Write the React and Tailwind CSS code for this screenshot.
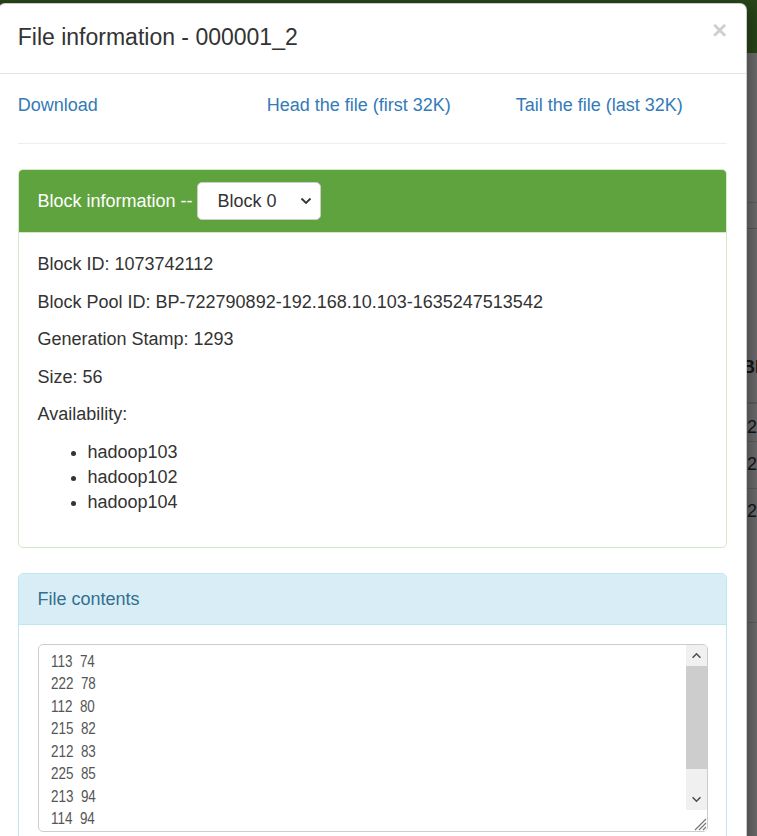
import React from 'react';

const fileLines = [
  '113  74',
  '222  78',
  '112  80',
  '215  82',
  '212  83',
  '225  85',
  '213  94',
  '114  94',
  '111  95',
];

const hosts = ['hadoop103', 'hadoop102', 'hadoop104'];

const Chevron = ({ up, className }) => (
  <svg viewBox="0 0 12 8" className={className} fill="none">
    <path
      d={up ? 'M1.5 6.5 L6 2 L10.5 6.5' : 'M1.5 1.5 L6 6 L10.5 1.5'}
      stroke="currentColor"
      strokeWidth="1.8"
    />
  </svg>
);

const Backdrop = () => (
  <div className="flex flex-col">
    <div className="h-[53px] bg-[#5fa33e]" />
    <div className="h-[150px] border-b border-[#e2e2e2]" />
    <div className="h-[26px] border-b border-[#cfcfcf]" />
    <div className="flex h-[175px] items-end border-b-2 border-[#ddd] pb-[22px]">
      <div className="w-[742px] shrink-0" />
      <span className="whitespace-nowrap font-bold text-[#333]">Block Size</span>
    </div>
    <div className="flex h-[38px] border-b border-[#ddd] pt-[11px]">
      <div className="w-[747px] shrink-0" />
      <span className="whitespace-nowrap text-[#333]">256 MB</span>
    </div>
    <div className="flex h-[47px] border-b border-[#ddd] pt-[10px]">
      <div className="w-[747px] shrink-0" />
      <span className="whitespace-nowrap text-[#333]">256 MB</span>
    </div>
    <div className="flex h-[134px] border-b border-[#ddd] pt-[10px]">
      <div className="w-[747px] shrink-0" />
      <span className="whitespace-nowrap text-[#333]">256 MB</span>
    </div>
  </div>
);

const App = () => {
  return (
    <div
      className="relative h-[836px] w-full overflow-hidden bg-white text-[18px] leading-[25px] text-[#333]"
      style={{ fontFamily: '"Liberation Sans", Arial, sans-serif' }}
    >
      <Backdrop />
      <div className="absolute inset-0 bg-black/[0.57]" />

      {/* modal */}
      <div className="absolute -left-[2px] top-[3px] w-[749px] rounded-[7px] border border-black/20 bg-white shadow-[0_6px_19px_rgba(0,0,0,0.5)]">
        <div className="flex items-start justify-between border-b border-[#e5e5e5] px-[18.75px] pb-[20px] pt-[17px]">
          <h4 className="text-[23px] leading-[32px] text-[#333]">File information - 000001_2</h4>
          <button className="-mt-[4px] text-[26px] font-bold leading-none text-black/20">×</button>
        </div>

        <div className="p-[18.75px]">
          <div className="grid grid-cols-3 gap-x-[37.5px]">
            <a className="text-[#337ab7]">Download</a>
            <a className="text-[#337ab7]">Head the file (first 32K)</a>
            <a className="text-[#337ab7]">Tail the file (last 32K)</a>
          </div>
          <hr className="my-[25px] border-t border-[#eee]" />

          <div className="mb-[25px] rounded-[5px] border border-[#d6e9c6]">
            <div className="flex items-center rounded-t-[4px] border-b border-[#d6e9c6] bg-[#5fa33e] px-[18.75px] py-[12.5px] text-white">
              <span>Block information --</span>
              <div className="ml-[4px] flex h-[37.5px] w-[124px] items-center justify-between rounded-[5px] border border-[#ccc] bg-white pl-[20px] pr-[8px] text-[#333]">
                <span>Block 0</span>
                <Chevron className="h-[8px] w-[12px] text-[#333]" />
              </div>
            </div>
            <div className="px-[18.75px] pb-[20px] pt-[18.75px]">
              <p className="mb-[12.5px]">Block ID: 1073742112</p>
              <p className="mb-[12.5px]">Block Pool ID: BP-722790892-192.168.10.103-1635247513542</p>
              <p className="mb-[12.5px]">Generation Stamp: 1293</p>
              <p className="mb-[12.5px]">Size: 56</p>
              <p className="mb-[12.5px]">Availability:</p>
              <ul className="mb-[12.5px] list-disc pl-[50px]">
                {hosts.map((h) => (
                  <li key={h}>{h}</li>
                ))}
              </ul>
            </div>
          </div>

          <div className="rounded-[5px] border border-[#bce8f1]">
            <div className="rounded-t-[4px] border-b border-[#bce8f1] bg-[#d9edf7] px-[18.75px] py-[12.5px] text-[#31708f]">
              File contents
            </div>
            <div className="p-[18.75px]">
              <div className="flex h-[188px] overflow-hidden rounded-[5px] border border-[#ccc] bg-white">
                <div className="flex-1 overflow-hidden px-[12px] pt-[6px]">
                  <div className="origin-left scale-x-[0.84] whitespace-pre text-[16px] leading-[22.5px] text-[#555]">
                    {fileLines.map((l, i) => (
                      <div key={i}>{l}</div>
                    ))}
                  </div>
                </div>
                <div className="flex w-[21px] flex-col">
                  <div className="flex h-[21px] items-center justify-center bg-[#f0f0f0]">
                    <Chevron up className="h-[7px] w-[11px] text-[#505050]" />
                  </div>
                  <div className="h-[103px] bg-[#cdcdcd]" />
                  <div className="flex-1 bg-[#f0f0f0]" />
                  <div className="flex h-[20px] items-center justify-center bg-[#f0f0f0]">
                    <Chevron className="h-[7px] w-[11px] text-[#505050]" />
                  </div>
                  <div className="flex h-[21px] items-end justify-end bg-white">
                    <svg viewBox="0 0 14 14" className="h-[14px] w-[14px]">
                      <path d="M13 2 L2 13 M13 6 L6 13 M13 10 L10 13" stroke="#777" strokeWidth="1.2" />
                    </svg>
                  </div>
                </div>
              </div>
            </div>
          </div>
        </div>
      </div>
    </div>
  );
};

export default App;
